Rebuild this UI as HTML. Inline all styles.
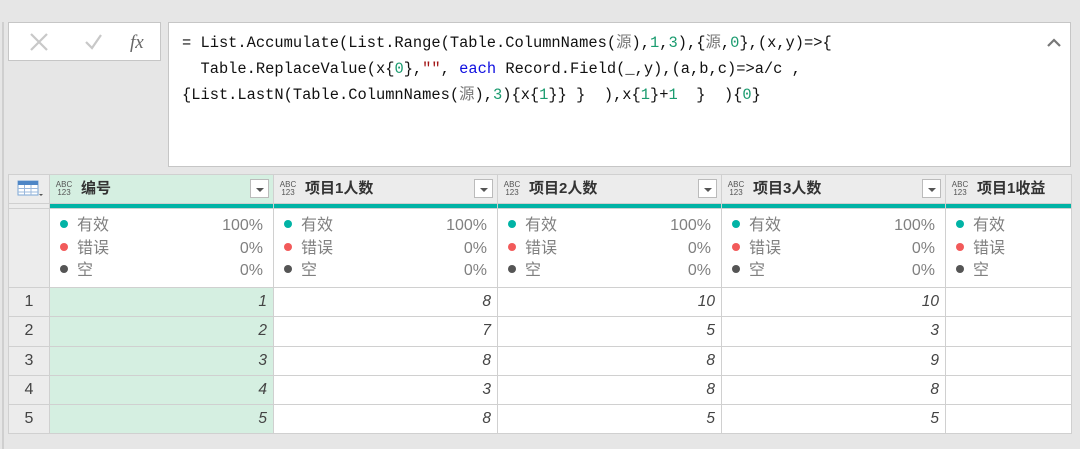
<!DOCTYPE html>
<html><head><meta charset="utf-8"><style>
*{margin:0;padding:0;box-sizing:border-box}
body{width:1080px;height:449px;background:#e6e6e6;position:relative;overflow:hidden;font-family:"Liberation Sans","Noto Sans CJK SC",sans-serif}
.abs{position:absolute}
#lb{left:2px;top:22px;width:2px;height:427px;background:#cfcfcf}
#fx{left:8px;top:22px;width:153px;height:39px;background:#fff;border:1px solid #c6c6c6}
#fb{left:168px;top:22px;width:903px;height:145px;background:#fff;border:1px solid #c6c6c6}
.code{position:absolute;left:13px;font-family:"Liberation Mono","Noto Sans CJK SC",monospace;font-size:15.4px;color:#111;white-space:pre;line-height:26px}
.n{color:#1a9b6f}.k{color:#1010e0}.c{color:#777}
table{position:absolute;left:8px;top:174px;border-collapse:collapse;table-layout:fixed;background:#fff}
td{border:1px solid #d0d0d0;padding:0;overflow:hidden;white-space:nowrap}
.h td{height:29px;line-height:0;background:#ececec;font-weight:bold;font-size:15px;color:#333;vertical-align:top}
.h td.sel{background:#d5efe1}
.bar td{height:5px;line-height:0;font-size:0;background:#01b3a5;border-top:none;border-bottom:none}
.st td{height:79px;vertical-align:top;font-size:16px;color:#808080;line-height:22.5px;padding-top:6px}
.st td.rn,.d td.rn{background:#ececec}
.d td{height:29.3px;text-align:right;font-style:italic;font-size:15.5px;color:#444;padding-right:6px}
.d td.rn{text-align:center;font-style:normal;font-size:16px;color:#444;padding-right:0}
.d td.sel{background:#d5efe1}
.ln{display:flex;padding:0 10px}
.ln span:first-child{flex:1}
.dot{display:inline-block;width:8px;height:8px;border-radius:50%;margin-right:9px;vertical-align:2px}
.abc{display:inline-block;font-size:8px;line-height:8px;color:#555;font-weight:normal;vertical-align:middle;margin:0 8px 0 5px;width:18px;text-align:center}
.dd{position:absolute;right:4px;top:4px;width:19px;height:19px;border:1px solid #bbb;background:#fff}
.dd:after{content:"";position:absolute;left:5px;top:8px;border-left:4px solid transparent;border-right:4px solid transparent;border-top:4px solid #555}
.hc{position:relative;height:28px;line-height:28px;overflow:hidden}
</style></head><body>
<div id="lb" class="abs"></div>
<div id="fx" class="abs">
<svg width="153" height="39" style="position:absolute;left:0;top:0">
<path d="M22 11 L38 27 M38 11 L22 27" stroke="#c8c8c8" stroke-width="2.2" fill="none"/>
<path d="M77 19 L83 25 L92 12" stroke="#c8c8c8" stroke-width="2.2" fill="none"/>
<text x="121" y="25" font-family="Liberation Serif,serif" font-style="italic" font-size="19" fill="#666">fx</text>
</svg></div>
<div id="fb" class="abs">
<div class="code" style="top:7px">= List.Accumulate(List.Range(Table.ColumnNames(<span class="c">源</span>),<span class="n">1</span>,<span class="n">3</span>),{<span class="c">源</span>,<span class="n">0</span>},(x,y)=>{
  Table.ReplaceValue(x{<span class="n">0</span>},<span style="color:#a31515">""</span>, <span class="k">each</span> Record.Field(_,y),(a,b,c)=>a/c ,
{List.LastN(Table.ColumnNames(<span class="c">源</span>),<span class="n">3</span>){x{<span class="n">1</span>}} }  ),x{<span class="n">1</span>}+<span class="n">1</span>  }  ){<span class="n">0</span>}</div>
<svg width="16" height="10" style="position:absolute;left:877px;top:15px"><path d="M2 8 L8 2 L14 8" stroke="#777" stroke-width="2.2" fill="none"/></svg>
</div>
<table>
<colgroup><col style="width:41px"><col style="width:224px"><col style="width:224px"><col style="width:224px"><col style="width:224px"><col style="width:126px"></colgroup>
<tr class="h"><td class="rn" style="background:#ececec"><svg width="40" height="27" style="display:block"><rect x="9" y="6" width="20" height="14" fill="#fff" stroke="#7aa6d6"/><rect x="9" y="6" width="20" height="4" fill="#4e86c6"/><path d="M9 13.5H29M9 17H29M15.5 10V20M22 10V20" stroke="#9bb8dc" stroke-width="1"/><path d="M30 19l2 2 2-2z" fill="#555"/></svg></td>
<td class="sel"><div class="hc"><span class="abc">ABC<br>123</span>编号<div class="dd"></div></div></td>
<td><div class="hc"><span class="abc">ABC<br>123</span>项目1人数<div class="dd"></div></div></td>
<td><div class="hc"><span class="abc">ABC<br>123</span>项目2人数<div class="dd"></div></div></td>
<td><div class="hc"><span class="abc">ABC<br>123</span>项目3人数<div class="dd"></div></div></td>
<td><div class="hc"><span class="abc">ABC<br>123</span>项目1收益</div></td></tr>
<tr class="bar"><td style="background:#ececec"></td><td></td><td></td><td></td><td></td><td></td></tr>
<tr class="st"><td class="rn"></td>
<td><div class="ln"><span><i class="dot" style="background:#01b3a5"></i>有效</span><span>100%</span></div><div class="ln"><span><i class="dot" style="background:#f25a5a"></i>错误</span><span>0%</span></div><div class="ln"><span><i class="dot" style="background:#555"></i>空</span><span>0%</span></div></td>
<td><div class="ln"><span><i class="dot" style="background:#01b3a5"></i>有效</span><span>100%</span></div><div class="ln"><span><i class="dot" style="background:#f25a5a"></i>错误</span><span>0%</span></div><div class="ln"><span><i class="dot" style="background:#555"></i>空</span><span>0%</span></div></td>
<td><div class="ln"><span><i class="dot" style="background:#01b3a5"></i>有效</span><span>100%</span></div><div class="ln"><span><i class="dot" style="background:#f25a5a"></i>错误</span><span>0%</span></div><div class="ln"><span><i class="dot" style="background:#555"></i>空</span><span>0%</span></div></td>
<td><div class="ln"><span><i class="dot" style="background:#01b3a5"></i>有效</span><span>100%</span></div><div class="ln"><span><i class="dot" style="background:#f25a5a"></i>错误</span><span>0%</span></div><div class="ln"><span><i class="dot" style="background:#555"></i>空</span><span>0%</span></div></td>
<td><div class="ln"><span><i class="dot" style="background:#01b3a5"></i>有效</span></div><div class="ln"><span><i class="dot" style="background:#f25a5a"></i>错误</span></div><div class="ln"><span><i class="dot" style="background:#555"></i>空</span></div></td></tr>
<tr class="d"><td class="rn">1</td><td class="sel">1</td><td>8</td><td>10</td><td>10</td><td></td></tr>
<tr class="d"><td class="rn">2</td><td class="sel">2</td><td>7</td><td>5</td><td>3</td><td></td></tr>
<tr class="d"><td class="rn">3</td><td class="sel">3</td><td>8</td><td>8</td><td>9</td><td></td></tr>
<tr class="d"><td class="rn">4</td><td class="sel">4</td><td>3</td><td>8</td><td>8</td><td></td></tr>
<tr class="d"><td class="rn">5</td><td class="sel">5</td><td>8</td><td>5</td><td>5</td><td></td></tr>
</table>
</body></html>
